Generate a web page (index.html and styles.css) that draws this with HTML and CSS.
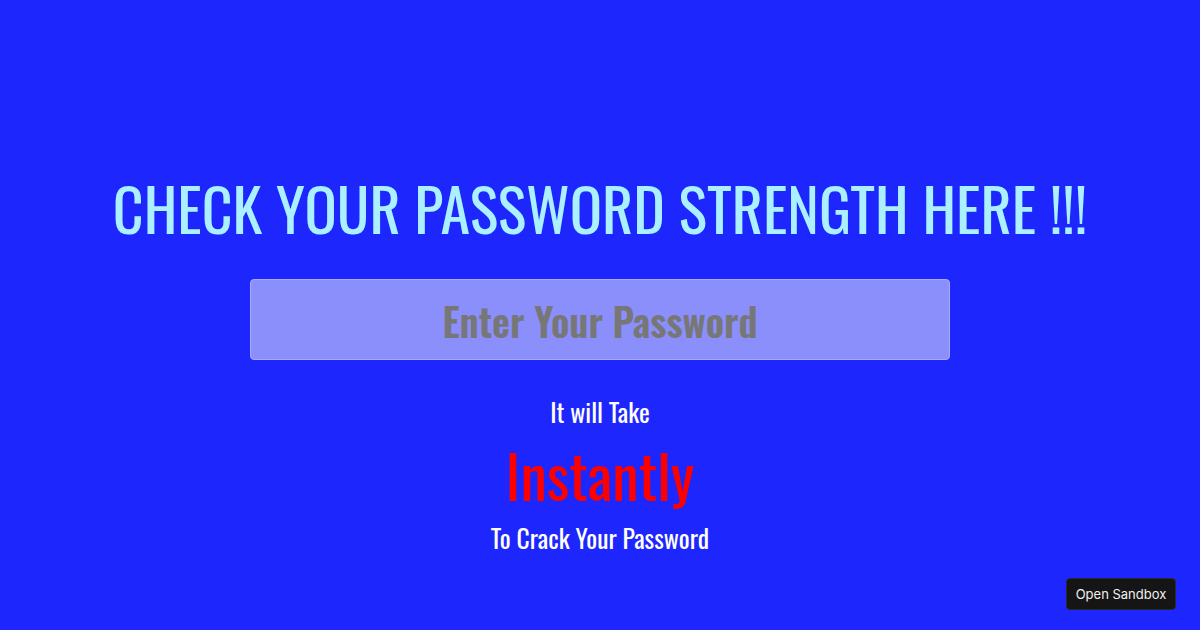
FILE: index.html
```html
<!DOCTYPE html>
<html lang="en">
<head>
<meta charset="utf-8">
<title>Password Strength</title>
<link rel="stylesheet" href="styles.css">
</head>
<body>
<main class="page">
  <h1 class="title">CHECK YOUR PASSWORD STRENGTH HERE !!!</h1>
  <input class="password" type="password" placeholder="Enter Your Password">
  <p class="line line-first">It will Take</p>
  <p class="time">Instantly</p>
  <p class="line">To Crack Your Password</p>
</main>
<button class="sandbox">Open Sandbox</button>
</body>
</html>
```
FILE: styles.css
```css
html, body {
  margin: 0;
  padding: 0;
  height: 100%;
}
body {
  background: #1e26fe;
  font-family: Oswald, "Liberation Sans Narrow", "DejaVu Sans Condensed", sans-serif;
  overflow: hidden;
}
.page {
  height: 100%;
  display: flex;
  flex-direction: column;
  align-items: center;
  padding-top: 164px;
  box-sizing: border-box;
}
.title {
  margin: 0;
  font-weight: 400;
  font-size: 60px;
  line-height: 86px;
  color: #aaf0ff;
}
.password {
  margin-top: 29px;
  width: 700px;
  height: 81px;
  box-sizing: border-box;
  background: #8b8ffb;
  border: 1px solid #a9acfb;
  border-radius: 4px;
  text-align: center;
  font-family: inherit;
  font-size: 39px;
  font-weight: 600;
  color: #777;
  outline: none;
}
.password::placeholder {
  color: #777;
}
.line {
  margin: 0;
  color: #fff;
  font-size: 25.6px;
  line-height: 34px;
}
.line-first {
  margin-top: 34px;
}
.time {
  margin: 0;
  color: #ff0000;
  font-size: 60px;
  line-height: 92px;
}
.sandbox {
  position: fixed;
  right: 24px;
  bottom: 20px;
  width: 110px;
  height: 32px;
  background: #151515;
  color: #f0f0f0;
  border: 1px solid #2a2a2a;
  border-radius: 4px;
  font-family: Inter, "Liberation Sans", sans-serif;
  font-size: 13px;
  padding: 0;
}
```
